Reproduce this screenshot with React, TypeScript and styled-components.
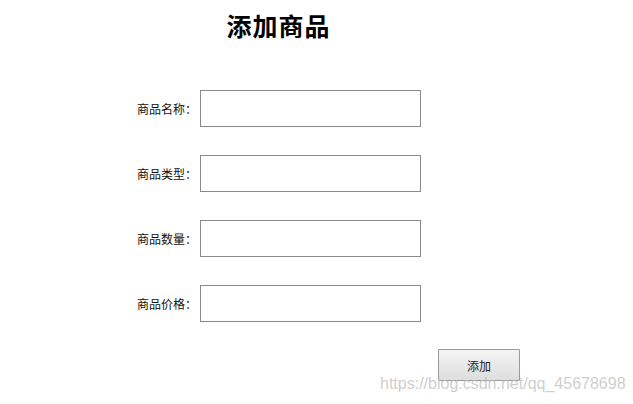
import * as React from 'react'
import styled, { createGlobalStyle } from 'styled-components';

const GlobalStyle = createGlobalStyle`
    html, body {
        margin: 0;
        padding: 0;
        background: #ffffff;
    }
    body {
        font-family: "Liberation Sans", "Noto Sans CJK SC", sans-serif;
        color: #000;
    }
`

const Page = styled.div`
    position: relative;
    width: 633px;
    height: 404px;
    overflow: hidden;
`

const FormArea = styled.div`
    width: 557px;
    display: flex;
    flex-direction: column;
    align-items: center;
    padding-top: 11px;
`

const Title = styled.h2`
    margin: 0;
    font-family: "Liberation Serif", "Noto Sans CJK SC", serif;
    font-size: 25px;
    line-height: 34px;
    font-weight: bold;
    letter-spacing: 1px;
`

const Fields = styled.div`
    width: 285px;
    display: flex;
    flex-direction: column;
    gap: 28px;
    margin-top: 45px;
`

const Row = styled.label`
    display: flex;
    align-items: center;
    gap: 3px;
`

const Label = styled.span`
    width: 61px;
    flex: none;
    text-align: right;
    font-family: "Noto Sans CJK SC", sans-serif;
    font-size: 12px;
    color: #111;
    white-space: nowrap;
`

const TextInput = styled.input`
    box-sizing: border-box;
    width: 221px;
    height: 37px;
    border: 1px solid #8a8a8a;
    background: #fff;
    padding: 0 4px;
    outline: none;
`

const Actions = styled.div`
    align-self: stretch;
    display: flex;
    padding-left: 438px;
    margin-top: 27px;
`

const SubmitButton = styled.button`
    box-sizing: border-box;
    width: 82px;
    height: 32px;
    border: 1px solid #9a9a9a;
    border-radius: 1px;
    background: linear-gradient(#f4f4f4, #dedede);
    font-family: "Noto Sans CJK SC", sans-serif;
    font-size: 12px;
    color: #222;
    padding: 0;
    cursor: pointer;
`

const Watermark = styled.span`
    position: absolute;
    left: 380px;
    top: 375px;
    font-family: "Liberation Sans", sans-serif;
    font-size: 16px;
    color: rgba(190, 190, 190, 0.75);
    white-space: nowrap;
    pointer-events: none;
`

const fields = ['商品名称：', '商品类型：', '商品数量：', '商品价格：']

export default function App() {
    return (<Page>
        <GlobalStyle />
        <FormArea>
            <Title>添加商品</Title>
            <Fields>
                {fields.map(name => (
                    <Row key={name}>
                        <Label>{name}</Label>
                        <TextInput type="text" />
                    </Row>
                ))}
            </Fields>
            <Actions>
                <SubmitButton type="button">添加</SubmitButton>
            </Actions>
        </FormArea>
        <Watermark>https://blog.csdn.net/qq_45678698</Watermark>
    </Page>)
}
